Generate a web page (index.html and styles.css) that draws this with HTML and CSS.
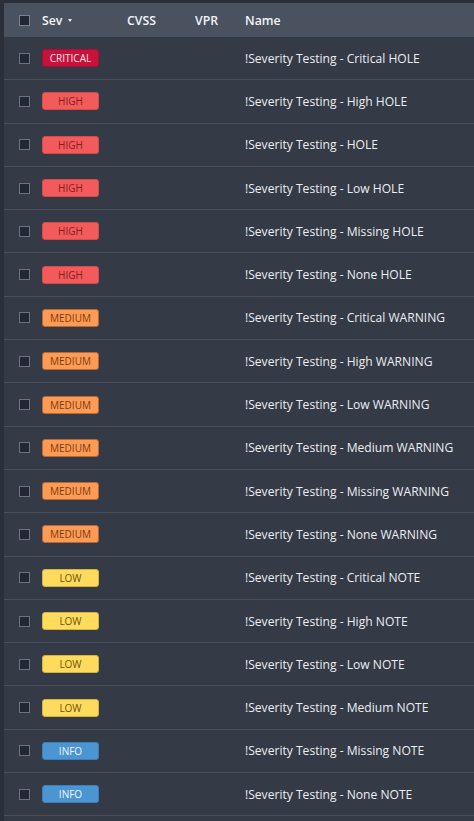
FILE: index.html
```html
<!DOCTYPE html>
<html>
<head>
<meta charset="utf-8">
<link rel="stylesheet" href="styles.css">
</head>
<body>
<div class="table">
  <div class="head">
    <div class="c-check"><span class="box"></span></div>
    <div class="c-sev">Sev <span class="caret"></span></div>
    <div class="c-cvss">CVSS</div>
    <div class="c-vpr">VPR</div>
    <div class="c-name">Name</div>
  </div>
  <div class="row"><div class="c-check"><span class="box"></span></div><div class="c-sev"><span class="badge critical">CRITICAL</span></div><div class="c-cvss"></div><div class="c-vpr"></div><div class="c-name">!Severity Testing - Critical HOLE</div></div>
  <div class="row"><div class="c-check"><span class="box"></span></div><div class="c-sev"><span class="badge high">HIGH</span></div><div class="c-cvss"></div><div class="c-vpr"></div><div class="c-name">!Severity Testing - High HOLE</div></div>
  <div class="row"><div class="c-check"><span class="box"></span></div><div class="c-sev"><span class="badge high">HIGH</span></div><div class="c-cvss"></div><div class="c-vpr"></div><div class="c-name">!Severity Testing - HOLE</div></div>
  <div class="row"><div class="c-check"><span class="box"></span></div><div class="c-sev"><span class="badge high">HIGH</span></div><div class="c-cvss"></div><div class="c-vpr"></div><div class="c-name">!Severity Testing - Low HOLE</div></div>
  <div class="row"><div class="c-check"><span class="box"></span></div><div class="c-sev"><span class="badge high">HIGH</span></div><div class="c-cvss"></div><div class="c-vpr"></div><div class="c-name">!Severity Testing - Missing HOLE</div></div>
  <div class="row"><div class="c-check"><span class="box"></span></div><div class="c-sev"><span class="badge high">HIGH</span></div><div class="c-cvss"></div><div class="c-vpr"></div><div class="c-name">!Severity Testing - None HOLE</div></div>
  <div class="row"><div class="c-check"><span class="box"></span></div><div class="c-sev"><span class="badge medium">MEDIUM</span></div><div class="c-cvss"></div><div class="c-vpr"></div><div class="c-name">!Severity Testing - Critical WARNING</div></div>
  <div class="row"><div class="c-check"><span class="box"></span></div><div class="c-sev"><span class="badge medium">MEDIUM</span></div><div class="c-cvss"></div><div class="c-vpr"></div><div class="c-name">!Severity Testing - High WARNING</div></div>
  <div class="row"><div class="c-check"><span class="box"></span></div><div class="c-sev"><span class="badge medium">MEDIUM</span></div><div class="c-cvss"></div><div class="c-vpr"></div><div class="c-name">!Severity Testing - Low WARNING</div></div>
  <div class="row"><div class="c-check"><span class="box"></span></div><div class="c-sev"><span class="badge medium">MEDIUM</span></div><div class="c-cvss"></div><div class="c-vpr"></div><div class="c-name">!Severity Testing - Medium WARNING</div></div>
  <div class="row"><div class="c-check"><span class="box"></span></div><div class="c-sev"><span class="badge medium">MEDIUM</span></div><div class="c-cvss"></div><div class="c-vpr"></div><div class="c-name">!Severity Testing - Missing WARNING</div></div>
  <div class="row"><div class="c-check"><span class="box"></span></div><div class="c-sev"><span class="badge medium">MEDIUM</span></div><div class="c-cvss"></div><div class="c-vpr"></div><div class="c-name">!Severity Testing - None WARNING</div></div>
  <div class="row"><div class="c-check"><span class="box"></span></div><div class="c-sev"><span class="badge low">LOW</span></div><div class="c-cvss"></div><div class="c-vpr"></div><div class="c-name">!Severity Testing - Critical NOTE</div></div>
  <div class="row"><div class="c-check"><span class="box"></span></div><div class="c-sev"><span class="badge low">LOW</span></div><div class="c-cvss"></div><div class="c-vpr"></div><div class="c-name">!Severity Testing - High NOTE</div></div>
  <div class="row"><div class="c-check"><span class="box"></span></div><div class="c-sev"><span class="badge low">LOW</span></div><div class="c-cvss"></div><div class="c-vpr"></div><div class="c-name">!Severity Testing - Low NOTE</div></div>
  <div class="row"><div class="c-check"><span class="box"></span></div><div class="c-sev"><span class="badge low">LOW</span></div><div class="c-cvss"></div><div class="c-vpr"></div><div class="c-name">!Severity Testing - Medium NOTE</div></div>
  <div class="row"><div class="c-check"><span class="box"></span></div><div class="c-sev"><span class="badge info">INFO</span></div><div class="c-cvss"></div><div class="c-vpr"></div><div class="c-name">!Severity Testing - Missing NOTE</div></div>
  <div class="row"><div class="c-check"><span class="box"></span></div><div class="c-sev"><span class="badge info">INFO</span></div><div class="c-cvss"></div><div class="c-vpr"></div><div class="c-name">!Severity Testing - None NOTE</div></div>
</div>
</body>
</html>
```
FILE: styles.css
```css
html, body {
  margin: 0;
  padding: 0;
  background: #2a2f39;
  height: 100%;
  overflow: hidden;
}
body {
  font-family: "Open Sans", "Liberation Sans", sans-serif;
  color: #e8eaee;
  padding: 3px 0 0 4px;
  box-sizing: border-box;
}
.table {
  background: #343a46;
  min-height: 100%;
}
.head, .row {
  display: flex;
  align-items: center;
}
.head {
  height: 34px;
  background: #4a525f;
  font-size: 12.3px;
  font-weight: 600;
  color: #f2f4f7;
}
.row {
  height: 42.3px;
  border-bottom: 1px solid #4a515d;
  font-size: 12.1px;
  color: #eceef2;
}
.c-check {
  width: 15px;
  padding-left: 15px;
  display: flex;
  align-items: center;
}
.box {
  display: block;
  width: 9px;
  height: 9px;
  border: 1px solid #6c7482;
  background: #222733;
}
.head .box {
  border-color: #7a8290;
}
.c-sev {
  width: 57px;
  padding-left: 8px;
  display: flex;
  align-items: center;
  gap: 6px;
}
.caret {
  display: inline-block;
  width: 0;
  height: 0;
  border-left: 2.5px solid transparent;
  border-right: 2.5px solid transparent;
  border-top: 3px solid #e8eaee;
  margin-top: 1px;
}
.c-cvss {
  width: 68px;
  padding-left: 28px;
}
.c-vpr {
  width: 50px;
}
.c-name {
  flex: 1;
  white-space: nowrap;
}
.badge {
  display: block;
  width: 55px;
  height: 16px;
  line-height: 16px;
  text-align: center;
  font-size: 10px;
  border-radius: 3px;
  border: 1px solid transparent;
}
.critical {
  background: #c9113d;
  border-color: #a80e33;
  color: #fbe3e8;
}
.high {
  background: #f25b5b;
  border-color: #d84a4a;
  color: #8a1c1c;
}
.medium {
  background: #fd9b55;
  border-color: #b56a35;
  color: #7a3c12;
}
.low {
  background: #fedb5c;
  border-color: #d4b440;
  color: #6b5510;
}
.info {
  background: #4b95d2;
  border-color: #3d80b8;
  color: #eef5fb;
}
```
